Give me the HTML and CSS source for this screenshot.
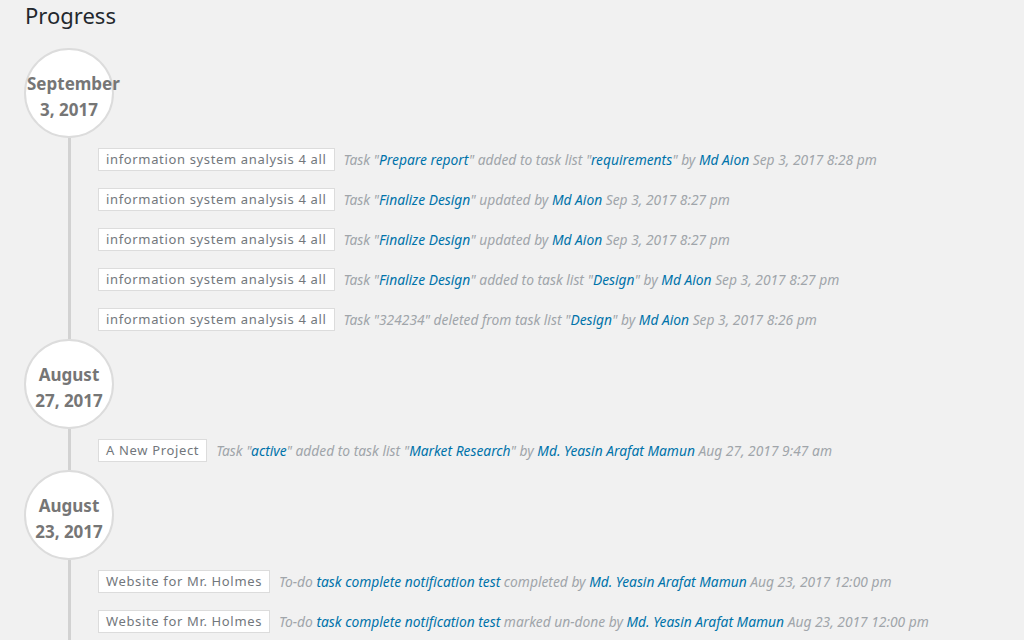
FILE: index.html
```html
<!DOCTYPE html>
<html>
<head>
<meta charset="utf-8">
<link rel="stylesheet" href="styles.css">
</head>
<body>
<h1 class="title">Progress</h1>
<div class="timeline">
  <section class="day">
    <div class="date">September<br>3, 2017</div>
    <ul class="events">
      <li class="event"><span class="project">information system analysis 4 all</span><span class="desc">Task "<a>Prepare report</a>" added to task list "<a>requirements</a>" by <a>Md Aion</a> Sep 3, 2017 8:28 pm</span></li>
      <li class="event"><span class="project">information system analysis 4 all</span><span class="desc">Task "<a>Finalize Design</a>" updated by <a>Md Aion</a> Sep 3, 2017 8:27 pm</span></li>
      <li class="event"><span class="project">information system analysis 4 all</span><span class="desc">Task "<a>Finalize Design</a>" updated by <a>Md Aion</a> Sep 3, 2017 8:27 pm</span></li>
      <li class="event"><span class="project">information system analysis 4 all</span><span class="desc">Task "<a>Finalize Design</a>" added to task list "<a>Design</a>" by <a>Md Aion</a> Sep 3, 2017 8:27 pm</span></li>
      <li class="event"><span class="project">information system analysis 4 all</span><span class="desc">Task "324234" deleted from task list "<a>Design</a>" by <a>Md Aion</a> Sep 3, 2017 8:26 pm</span></li>
    </ul>
  </section>
  <section class="day">
    <div class="date">August<br>27, 2017</div>
    <ul class="events">
      <li class="event"><span class="project">A New Project</span><span class="desc">Task "<a>active</a>" added to task list "<a>Market Research</a>" by <a>Md. Yeasin Arafat Mamun</a> Aug 27, 2017 9:47 am</span></li>
    </ul>
  </section>
  <section class="day">
    <div class="date">August<br>23, 2017</div>
    <ul class="events events-last">
      <li class="event"><span class="project">Website for Mr. Holmes</span><span class="desc">To-do <a>task complete notification test</a> completed by <a>Md. Yeasin Arafat Mamun</a> Aug 23, 2017 12:00 pm</span></li>
      <li class="event"><span class="project">Website for Mr. Holmes</span><span class="desc">To-do <a>task complete notification test</a> marked un-done by <a>Md. Yeasin Arafat Mamun</a> Aug 23, 2017 12:00 pm</span></li>
    </ul>
  </section>
</div>
</body>
</html>
```

FILE: styles.css
```css
html, body {
  margin: 0;
  padding: 0;
  background: #f1f1f1;
  overflow: hidden;
  height: 640px;
}
body {
  font-family: "Noto Sans", "Open Sans", sans-serif;
  color: #444;
}
.title {
  margin: 0;
  padding-left: 25px;
  font-size: 22px;
  font-weight: 400;
  line-height: 30px;
  color: #23282d;
}
.timeline {
  padding-top: 18px;
}
.date {
  box-sizing: border-box;
  width: 90px;
  height: 90px;
  margin-left: 24px;
  padding: 21px 1px 0 1px;
  border: 2px solid #dcdcdc;
  border-radius: 50%;
  background: #fff;
  text-align: center;
  font-size: 17px;
  font-weight: 700;
  line-height: 26px;
  color: #767676;
  white-space: nowrap;
}
.events {
  list-style: none;
  margin: 0 0 0 68px;
  padding: 10px 0 8px 27px;
  border-left: 3px solid #d2d2d2;
  display: flex;
  flex-direction: column;
  gap: 17px;
}
.events-last {
  padding-bottom: 30px;
}
.event {
  display: flex;
  align-items: center;
  gap: 9px;
  height: 23px;
  white-space: nowrap;
}
.project {
  box-sizing: border-box;
  height: 23px;
  line-height: 21px;
  padding: 0 7px;
  border: 1px solid #dcdcdc;
  background: #fff;
  font-size: 13px;
  letter-spacing: 0.65px;
  color: #72777c;
}
.desc {
  font-size: 13.8px;
  font-style: italic;
  color: #a0a5aa;
}
.desc a {
  color: #0073aa;
}
```
